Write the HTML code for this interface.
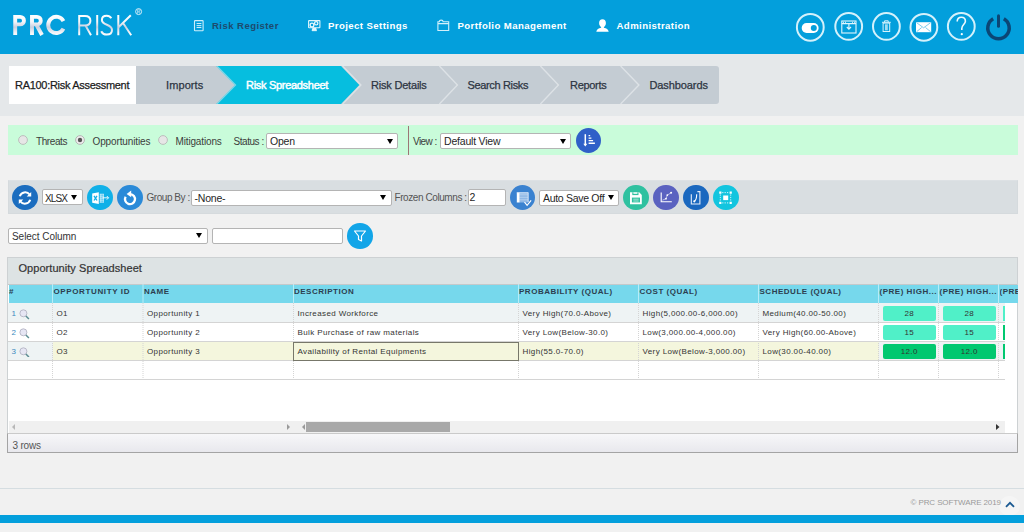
<!DOCTYPE html>
<html><head><meta charset="utf-8">
<style>
*{box-sizing:border-box;margin:0;padding:0}
html,body{width:1024px;height:532px;overflow:hidden;background:#f1f1f1;font-family:"Liberation Sans",sans-serif;position:relative}
.a{position:absolute;white-space:nowrap}
#hdr{left:0;top:0;width:1024px;height:54px;background:#039fdc}
.nav{font-size:9.6px;font-weight:700;color:#fff;top:19.8px;line-height:12px;letter-spacing:0.42px}
.circ{width:29px;height:29px;border:2px solid #d6f3fc;border-radius:50%;top:12.5px}
#band{left:0;top:54px;width:1024px;height:62px;background:#e5e8ea}
.tab{font-size:11px;color:#2d3542;top:78.5px;line-height:12px;-webkit-text-stroke:0.25px currentColor}
.lbl{font-size:10px;color:#3c3c3c;line-height:12px}
.sel{background:#fff;border:1px solid #b4b4b4;border-radius:2px;font-size:10.5px;color:#262626;line-height:15px;padding-left:3px;letter-spacing:-0.2px}
.sel .ar{position:absolute;right:4.5px;top:4.8px;width:0;height:0;border-left:3px solid transparent;border-right:3px solid transparent;border-top:5.2px solid #000}
.btn{border-radius:50%;width:25.5px;height:25.5px}
.btn svg{position:absolute;left:0;top:0}
.g{font-size:8px;color:#333;line-height:10px;letter-spacing:0.38px}
.gh{font-size:8px;font-weight:700;color:#2c3e50;line-height:10px;letter-spacing:0.5px}
</style></head><body>
<!-- HEADER -->
<div id="hdr" class="a"></div>
<svg class="a" style="left:0;top:0" width="160" height="54">
<defs><linearGradient id="lg" gradientUnits="userSpaceOnUse" x1="0" y1="14" x2="0" y2="36"><stop offset="0" stop-color="#ffffff"/><stop offset="0.35" stop-color="#f4f6fa"/><stop offset="0.6" stop-color="#c9d0e0"/><stop offset="0.85" stop-color="#f2f4f8"/><stop offset="1" stop-color="#ffffff"/></linearGradient></defs>
<g fill="none" stroke="url(#lg)" stroke-width="3.9">
<path d="M15.2 35V16.9H20.2A3.75 3.75 0 0 1 20.2 24.4H15.2"/>
<path d="M32 35V16.9H37A3.75 3.75 0 0 1 37 24.4H32M36.2 24.4L42 35"/>
<path d="M63.45 21.1A8.1 8.1 0 1 0 63.45 28.7"/>
</g>
<g fill="none" stroke="url(#lg)" stroke-width="2">
<path d="M79.2 35.2V15.9H85C88.5 15.9 90.4 18 90.4 20.7C90.4 23.5 88.5 25.5 85 25.5H79.2M85.5 25.5L91 35.2"/>
<path d="M97.2 15V35.2"/>
<path d="M111.3 18.3C110.3 16.6 108.7 15.8 106.7 15.8C103.9 15.8 101.9 17.5 101.9 20C101.9 25.8 112 23.8 112 30C112 33 109.6 34.6 106.7 34.6C104.3 34.6 102.3 33.4 101.2 31.2"/>
<path d="M118.3 15V35.2M130.8 15.2L118.8 27M123.2 23.2L131.2 35.2"/>
</g>
<circle cx="138.6" cy="11.6" r="3" fill="none" stroke="#e8f4fa" stroke-width="0.9"/>
<path d="M137.6 13.6V9.8H139A1 1 0 0 1 139 11.8H137.6M138.8 11.8L139.8 13.6" fill="none" stroke="#e8f4fa" stroke-width="0.6"/>
</svg>
<!-- nav icons -->
<svg class="a" style="left:192px;top:19px" width="13" height="13"><rect x="2.5" y="1.6" width="8.6" height="10.2" rx="0.6" fill="none" stroke="#cdeefa" stroke-width="1.1"/><path d="M4.6 4.5h4.8M4.6 6.6h4.8M4.6 8.5h4.8" stroke="#cdeefa" stroke-width="1"/></svg>
<div class="a nav" style="left:212px;color:#1d4b6e;">Risk Register</div>
<svg class="a" style="left:307px;top:19px" width="15" height="13"><g fill="none" stroke="#e0f5fc" stroke-width="1.1"><rect x="1.6" y="1.6" width="11.3" height="7.2" rx="0.5"/><path d="M4.8 11.6h5"/></g><path d="M5.5 8.8l-0.8 2.5h5.2l-0.8-2.5z" fill="#e0f5fc"/><circle cx="5" cy="6" r="1.9" fill="none" stroke="#e8f8fe" stroke-width="1.3"/><circle cx="9.2" cy="4.3" r="1.7" fill="none" stroke="#e8f8fe" stroke-width="1.2"/></svg>
<div class="a nav" style="left:328px;">Project Settings</div>
<svg class="a" style="left:436px;top:18px" width="15" height="14"><path d="M1.9 3.7h1.4a1.9 1.6 0 0 1 3.8 0h5.6V12.5H1.9Z M1.9 5.6h10.8" fill="none" stroke="#d2f0fb" stroke-width="1.1"/></svg>
<div class="a nav" style="left:457.5px;">Portfolio Management</div>
<svg class="a" style="left:595px;top:18px" width="15" height="14"><path d="M7.5 1.2c2.2 0 3.4 1.6 3.4 3.8 0 2-1.1 3.6-2 4.1v.7c2.5.6 4.5 1.6 4.8 3.9H1.3c.3-2.3 2.3-3.3 4.8-3.9v-.7c-.9-.5-2-2.1-2-4.1 0-2.2 1.2-3.8 3.4-3.8z" fill="#fff"/></svg>
<div class="a nav" style="left:616.5px;">Administration</div>
<!-- right icons -->
<svg class="a" style="left:780px;top:0" width="244" height="54">
<g fill="none" stroke="#d4f1fb" stroke-width="2"><circle cx="30.3" cy="27.3" r="13.4"/><circle cx="68.7" cy="26.4" r="13.4"/><circle cx="106.4" cy="26.4" r="13.4"/><circle cx="143.9" cy="27.3" r="13.4"/><circle cx="181.3" cy="26.4" r="13.4"/></g>
<rect x="21.7" y="23.1" width="16.9" height="9.8" rx="4.9" fill="#fff"/><circle cx="33.8" cy="28" r="3" fill="#039fdc"/>
<g fill="none" stroke="#e2f6fd" stroke-width="1.1"><rect x="61.8" y="21" width="14.2" height="12"/><path d="M61.8 23.6h14.2M68.9 23.6v5.5M66.8 27l2.1 2.2 2.1-2.2"/></g><path d="M63 22.3h1M65 22.3h1M72 22.3h1M74 22.3h1" stroke="#e2f6fd" stroke-width="1"/>
<g fill="none" stroke="#d8f3fc" stroke-width="1"><path d="M102 22.3h8.8M104.6 22.3V20.8h3.6v1.5"/><rect x="103.1" y="23.1" width="6.6" height="8.4"/></g><rect x="105" y="24.3" width="2.8" height="6" fill="#9fdcf3"/>
<path d="M916 22.2h15.2v10H916z" transform="translate(-780 0)" fill="#fff"/><path d="M136.5 22.6l7.1 5.2 7.1-5.2M136.5 31.8l5.2-4.3M150.7 31.8l-5.2-4.3" fill="none" stroke="#6cc6ea" stroke-width="0.9"/>
<path d="M177.2 21.6c0-2.6 1.8-4.4 4.2-4.4s4 1.7 4 4c0 3-3.6 3.8-3.6 7.2v1.6" fill="none" stroke="#f0fafe" stroke-width="1.6"/><circle cx="181.8" cy="34.2" r="1.1" fill="#fff"/>
<path d="M213.15 18.73A10.7 10.7 0 1 0 223.85 18.73" fill="none" stroke="#0b4675" stroke-width="3.5"/><path d="M218.5 15.7v10.5" stroke="#0b4675" stroke-width="3" stroke-linecap="round"/>
</svg>

<!-- TAB BAND -->
<div id="band" class="a"></div>
<svg class="a" style="left:9px;top:66px" width="712" height="38">
<path d="M127 0H707a3 3 0 0 1 3 3V35a3 3 0 0 1-3 3H127Z" fill="#c4ccd3"/>
<rect x="0" y="0" width="127" height="38" fill="#fff"/>
<path d="M207.3 0H332L350.3 19L332 38H207.3L226 19Z" fill="#06bedf"/>
<path d="M207.8 0L226.5 19L207.8 38" fill="none" stroke="#80d6e6" stroke-width="1.3"/>
<path d="M333.6 0L351.9 19L333.6 38M430.4 0l18 19-18 19M531.4 0l18 19-18 19M611.6 0l18.3 19-18.3 19" fill="none" stroke="#dde2e6" stroke-width="1.4"/>
</svg>
<div class="a tab" style="left:15px;color:#1c1c1c;letter-spacing:-0.3px">RA100:Risk Assessment</div>
<div class="a tab" style="left:166px;letter-spacing:0.1px">Imports</div>
<div class="a tab" style="left:246px;color:#fff;letter-spacing:-0.3px;-webkit-text-stroke:0.45px #fff">Risk Spreadsheet</div>
<div class="a tab" style="left:371px;letter-spacing:-0.2px">Risk Details</div>
<div class="a tab" style="left:467.5px;letter-spacing:-0.35px">Search Risks</div>
<div class="a tab" style="left:570px;letter-spacing:-0.3px">Reports</div>
<div class="a tab" style="left:649.5px;letter-spacing:-0.1px">Dashboards</div>

<!-- GREEN BAR -->
<div class="a" style="left:8px;top:125px;width:1010px;height:30px;background:#c9fcda"></div>
<svg class="a" style="left:17px;top:134px" width="12" height="12"><circle cx="6" cy="6" r="4.4" fill="#e6e6e6" stroke="#b8b8b8" stroke-width="0.9"/></svg>
<div class="a lbl" style="left:36px;top:135.8px;letter-spacing:-0.4px">Threats</div>
<svg class="a" style="left:73.5px;top:134px" width="12" height="12"><circle cx="6" cy="6" r="4.4" fill="#ececec" stroke="#b0b0b0" stroke-width="0.9"/><circle cx="6" cy="6" r="2.2" fill="#555"/></svg>
<div class="a lbl" style="left:92.5px;top:135.8px;letter-spacing:-0.12px">Opportunities</div>
<svg class="a" style="left:157px;top:134px" width="12" height="12"><circle cx="6" cy="6" r="4.4" fill="#e6e6e6" stroke="#b8b8b8" stroke-width="0.9"/></svg>
<div class="a lbl" style="left:175.5px;top:135.8px;letter-spacing:-0.15px">Mitigations</div>
<div class="a lbl" style="left:233.5px;top:135.8px;letter-spacing:-0.45px">Status :</div>
<div class="a sel" style="left:266px;top:133px;width:132px;height:16px">Open<span class="ar"></span></div>
<div class="a" style="left:408px;top:125.5px;width:1.3px;height:29.5px;background:#9c7676"></div>
<div class="a lbl" style="left:413px;top:135.8px;letter-spacing:-0.55px">View :</div>
<div class="a sel" style="left:440px;top:133px;width:131px;height:16px">Default View<span class="ar"></span></div>
<div class="a btn" style="left:576px;top:128px;width:25px;height:25px;background:#3060c8"><svg width="25" height="25"><path d="M9.3 6.2v11" stroke="#fff" stroke-width="1.5"/><path d="M7.3 15.8l2 2.8 2-2.8z" fill="#fff"/><path d="M12.6 7h1.6v1.3h-1.6zM12.6 9.5h2.8v1.3h-2.8zM12.6 12h4.5v1.3h-4.5zM12.6 14.5h6.3v1.6h-6.3z" fill="#fff"/></svg></div>

<!-- TOOLBAR -->
<div class="a" style="left:8px;top:180px;width:1010px;height:34px;background:#d9dee1;border:1px solid #d5dadd;border-top-color:#dde1e4"></div>
<div class="a btn" style="left:12px;top:184.5px;background:#1b6dbf"><svg width="26" height="26"><path d="M7.8 11.3a5.6 5.6 0 0 1 9.8-1.8M18.2 14.7a5.6 5.6 0 0 1-9.8 1.8" fill="none" stroke="#fff" stroke-width="2"/><path d="M19.2 7v4.5h-4.5zM6.8 19v-4.5h4.5z" fill="#fff"/></svg></div>
<div class="a sel" style="left:41.5px;top:189px;width:41px;height:16px;padding-left:2.5px;font-size:10px;letter-spacing:-0.85px;line-height:17.5px">XLSX<span class="ar"></span></div>
<div class="a btn" style="left:87px;top:184.5px;background:#10b0e8"><svg width="26" height="26"><path d="M5.2 8.4L11.8 7.2V19L5.2 17.8Z" fill="#fff"/><path d="M7 10.9l3 4.6M10 10.9l-3 4.6" stroke="#10b0e8" stroke-width="1.3"/><path d="M12.6 9.2h4.3M12.6 11.2h4.3M12.6 13.2h4.3M12.6 15.2h4.3M12.6 17.2h4.3M13.4 9v8.5M14.9 9v8.5M16.4 9v8.5" stroke="#dff4fc" stroke-width="0.7"/><path d="M15.5 12.8h5.8M19.8 11l1.8 1.8-1.8 1.8" fill="none" stroke="#fff" stroke-width="0.9"/></svg></div>
<div class="a btn" style="left:117px;top:184.5px;background:#2a8ad8"><svg width="26" height="26"><path d="M13.2 9.1A5 5 0 1 1 8.6 11.7" fill="none" stroke="#fff" stroke-width="2.3"/><path d="M14.2 5.6V12.2L9.6 8.9Z" fill="#fff"/></svg></div>
<div class="a lbl" style="left:146.5px;top:191.8px;color:#555;letter-spacing:-0.45px">Group By :</div>
<div class="a sel" style="left:190.5px;top:189.5px;width:201px;height:16px">-None-<span class="ar"></span></div>
<div class="a lbl" style="left:394.5px;top:191.8px;color:#555;letter-spacing:-0.42px">Frozen Columns :</div>
<div class="a sel" style="left:467.5px;top:188.5px;width:38px;height:17.5px;padding-left:1px">2</div>
<div class="a btn" style="left:509.5px;top:184.5px;background:#3a82d0"><svg width="26" height="26"><path d="M9.5 7.5h8.5v10H9.5z" fill="#8fb8e6"/><path d="M9.5 9.8h8.5M9.5 12.3h8.5M9.5 14.8h8.5" stroke="#b8d3f1" stroke-width="0.9"/><path d="M6.8 7.5h2.8v10H6.8z" fill="#fff"/><path d="M6.8 7.8h11.4M18.2 7.5v9.5" stroke="#e4eefa" stroke-width="0.9"/><path d="M14.5 17.2l2.6 3.2 4-5" fill="none" stroke="#fff" stroke-width="1.2"/></svg></div>
<div class="a sel" style="left:539px;top:189.5px;width:80px;height:16px;padding-left:3px;letter-spacing:-0.3px">Auto Save Off<span class="ar" style="right:4.5px"></span></div>
<div class="a btn" style="left:623px;top:184.5px;background:#2fc1a0"><svg width="26" height="26"><path d="M7 7.3h9.2l2.6 2.6v9.4H7z" fill="#fff"/><path d="M9.3 7.3h6.2v2.8H9.3z" fill="#2fc1a0"/><path d="M10.4 7.3h4v1.5h-4z" fill="#fff"/><path d="M8.9 12.6h8.1v4.8H8.9z" fill="#2fc1a0"/><path d="M10.3 14.2h5.3M10.3 16h5.3" stroke="#c8efe5" stroke-width="0.8"/></svg></div>
<div class="a btn" style="left:653px;top:184.5px;background:#5a62c0"><svg width="26" height="26"><path d="M8.2 7.4V16.8H18.8" fill="none" stroke="#fff" stroke-width="1.1"/><path d="M9.4 15.2L13 13.7L14.3 10.1L18.1 7.8" fill="none" stroke="#dfe2f6" stroke-width="0.7"/><circle cx="13" cy="13.7" r="0.9" fill="#fff"/><circle cx="14.3" cy="10.1" r="0.9" fill="#fff"/><circle cx="18.1" cy="7.8" r="1" fill="#fff"/></svg></div>
<div class="a btn" style="left:683px;top:184.5px;background:#1a68bf"><svg width="26" height="26"><path d="M8.3 9.2V19H16.9V6.6H14.4" fill="none" stroke="#e6eef9" stroke-width="1.1"/><path d="M11.3 16.2C12.7 15.5 13.6 13.8 13.7 9.2" fill="none" stroke="#fff" stroke-width="1.1"/><circle cx="11.3" cy="16.3" r="1.1" fill="#fff"/></svg></div>
<div class="a btn" style="left:713px;top:184.5px;background:#12c5df"><svg width="26" height="26"><path d="M10.2 10.5h5v4.6h-5z" fill="#fff"/><path d="M6.2 6.5h2.2v2.2H6.2zM16.6 6.5h2.2v2.2h-2.2zM6.2 16.8h2.2v2.2H6.2zM16.6 16.8h2.2v2.2h-2.2z" fill="#fff"/><path d="M9.2 7.6h7M9.2 17.9h7M7.3 9.5v6.8M17.7 9.5v6.8" stroke="#e8fafd" stroke-width="0.9" stroke-dasharray="1.2 1.2"/></svg></div>

<!-- FILTER ROW -->
<div class="a sel" style="left:7.5px;top:227.5px;width:200px;height:16.5px;font-size:10px;padding-left:3.5px;color:#333;letter-spacing:-0.05px;line-height:16px">Select Column<span class="ar" style="right:5px"></span></div>
<div class="a sel" style="left:211.5px;top:227.5px;width:131px;height:16.5px"></div>
<div class="a btn" style="left:347px;top:223px;background:#12a5e8"><svg width="26" height="26"><path d="M7.5 8h11l-4 5v5l-3-1.5v-3.5z" fill="none" stroke="#fff" stroke-width="1.2" stroke-linejoin="round"/></svg></div>

<!-- GRID PANEL -->
<div class="a" style="left:7px;top:257px;width:1011px;height:196px;border:1px solid #cdd1d3;background:#fff"></div>
<div class="a" style="left:8px;top:258px;width:1009px;height:26.5px;background:#dde3e4;border-bottom:1px solid #c4c9cb"></div>
<div class="a" style="left:18.5px;top:262px;font-size:11px;color:#333;line-height:13px;letter-spacing:0.05px;-webkit-text-stroke:0.2px #333">Opportunity Spreadsheet</div>
<!-- header -->
<div class="a" style="left:8.5px;top:284.5px;width:1009px;height:18.5px;background:#76d8ec"></div>
<svg class="a" style="left:8px;top:284px" width="1010" height="20"><path d="M44.5 0v19M135 0v19M285.5 0v19M510.5 0v19M630.5 0v19M750.5 0v19M870.5 0v19M930.5 0v19M990.5 0v19" stroke="#b7ecf7" stroke-width="1"/></svg>
<div class="a gh" style="left:9px;top:287px">#</div>
<div class="a gh" style="left:53.5px;top:287px;letter-spacing:0.62px">OPPORTUNITY ID</div>
<div class="a gh" style="left:144px;top:287px">NAME</div>
<div class="a gh" style="left:294px;top:287px;letter-spacing:0.5px">DESCRIPTION</div>
<div class="a gh" style="left:519px;top:287px;letter-spacing:0.52px">PROBABILITY (QUAL)</div>
<div class="a gh" style="left:639.5px;top:287px;letter-spacing:0.52px">COST (QUAL)</div>
<div class="a gh" style="left:759.5px;top:287px;letter-spacing:0.52px">SCHEDULE (QUAL)</div>
<div class="a gh" style="left:879.5px;top:287px;letter-spacing:0.52px">(PRE) HIGH...</div>
<div class="a gh" style="left:939.5px;top:287px;letter-spacing:0.52px">(PRE) HIGH...</div>
<div class="a" style="left:999.5px;top:284.5px;width:18px;height:18.5px;overflow:hidden"><div class="a gh" style="left:0;top:2.5px;letter-spacing:0.52px">(PRE) HIGH...</div></div>
<!-- rows -->
<div class="a" style="left:8px;top:303px;width:996.5px;height:20px;background:#eef3f4;border-bottom:1px solid #d4d4d4"></div>
<div class="a" style="left:8px;top:323px;width:996.5px;height:19px;background:#fff;border-bottom:1px solid #d4d4d4"></div>
<div class="a" style="left:8px;top:342px;width:996.5px;height:19px;background:#f4f6dd;border-bottom:1px solid #d4d4d4"></div>
<div class="a" style="left:8px;top:342px;width:44.5px;height:18px;background:#eef3f4"></div>
<div class="a" style="left:878.5px;top:342px;width:126px;height:18px;background:#eef3f4"></div>
<div class="a" style="left:8px;top:361px;width:996.5px;height:19px;background:#fff;border-bottom:1px solid #d4d4d4"></div>
<svg class="a" style="left:8px;top:303px" width="1000" height="77"><path d="M44.5 0v76M135 0v76M285.5 0v76M510.5 0v76M630.5 0v76M750.5 0v76M870.5 0v76M930.5 0v76M990.5 0v76" stroke="#d4d4d4" stroke-width="1" stroke-dasharray="1 1"/></svg>
<!-- selected cell -->
<div class="a" style="left:293px;top:342px;width:226px;height:19px;border:1px solid #77776a"></div>
<!-- row number + magnifier -->
<div class="a g" style="left:11.5px;top:309px;color:#3b8ac0">1</div>
<div class="a g" style="left:11.5px;top:328px;color:#3b8ac0">2</div>
<div class="a g" style="left:11.5px;top:347px;color:#3b8ac0">3</div>
<svg class="a" style="left:19px;top:307px" width="12" height="50"><circle cx="4.4" cy="6.3" r="3.5" fill="#e6e6f4" stroke="#b4b4c4" stroke-width="0.9"/><path d="M6.9 8.9l3 3.2" stroke="#5d8d94" stroke-width="1.5"/><circle cx="4.4" cy="25.3" r="3.5" fill="#e6e6f4" stroke="#b4b4c4" stroke-width="0.9"/><path d="M6.9 27.900000000000002l3 3.2" stroke="#5d8d94" stroke-width="1.5"/><circle cx="4.4" cy="44.3" r="3.5" fill="#e6e6f4" stroke="#b4b4c4" stroke-width="0.9"/><path d="M6.9 46.9l3 3.2" stroke="#5d8d94" stroke-width="1.5"/></svg>
<!-- cells row1 -->
<div class="a g" style="left:56.5px;top:309px">O1</div>
<div class="a g" style="left:147px;top:309px">Opportunity 1</div>
<div class="a g" style="left:297.5px;top:309px">Increased Workforce</div>
<div class="a g" style="left:522.5px;top:309px">Very High(70.0-Above)</div>
<div class="a g" style="left:642.5px;top:309px">High(5,000.00-6,000.00)</div>
<div class="a g" style="left:762.5px;top:309px">Medium(40.00-50.00)</div>
<div class="a g" style="left:56.5px;top:328px">O2</div>
<div class="a g" style="left:147px;top:328px">Opportunity 2</div>
<div class="a g" style="left:297.5px;top:328px">Bulk Purchase of raw materials</div>
<div class="a g" style="left:522.5px;top:328px">Very Low(Below-30.0)</div>
<div class="a g" style="left:642.5px;top:328px">Low(3,000.00-4,000.00)</div>
<div class="a g" style="left:762.5px;top:328px">Very High(60.00-Above)</div>
<div class="a g" style="left:56.5px;top:347px">O3</div>
<div class="a g" style="left:147px;top:347px">Opportunity 3</div>
<div class="a g" style="left:297.5px;top:347px">Availability of Rental Equipments</div>
<div class="a g" style="left:522.5px;top:347px">High(55.0-70.0)</div>
<div class="a g" style="left:642.5px;top:347px">Very Low(Below-3,000.00)</div>
<div class="a g" style="left:762.5px;top:347px">Low(30.00-40.00)</div>
<!-- colored score boxes -->
<div class="a g" style="left:883px;top:306px;width:52.5px;height:15px;background:#50f0c8;border-radius:2px;text-align:center;line-height:15px;letter-spacing:0.3px">28</div>
<div class="a g" style="left:943px;top:306px;width:52.5px;height:15px;background:#50f0c8;border-radius:2px;text-align:center;line-height:15px;letter-spacing:0.3px">28</div>
<div class="a" style="left:1003px;top:306px;width:1.5px;height:15px;background:#50f0c8"></div>
<div class="a g" style="left:883px;top:325px;width:52.5px;height:15px;background:#50f0c8;border-radius:2px;text-align:center;line-height:15px;letter-spacing:0.3px">15</div>
<div class="a g" style="left:943px;top:325px;width:52.5px;height:15px;background:#50f0c8;border-radius:2px;text-align:center;line-height:15px;letter-spacing:0.3px">15</div>
<div class="a" style="left:1003px;top:325px;width:1.5px;height:15px;background:#00c870"></div>
<div class="a g" style="left:883px;top:344px;width:52.5px;height:15px;background:#00c870;border-radius:2px;text-align:center;line-height:15px;letter-spacing:0.3px">12.0</div>
<div class="a g" style="left:943px;top:344px;width:52.5px;height:15px;background:#00c870;border-radius:2px;text-align:center;line-height:15px;letter-spacing:0.3px">12.0</div>
<div class="a" style="left:1003px;top:344px;width:1.5px;height:15px;background:#00c870"></div>
<!-- h scrollbar -->
<div class="a" style="left:8.5px;top:421px;width:996px;height:12px;background:#f0f0f0"></div>
<svg class="a" style="left:8px;top:421px" width="1000" height="12"><path d="M4 6l3-3v6z" fill="#b8b8b8"/><path d="M279 3v6l3-3z" fill="#9a9a9a"/><path d="M294 6l3-3v6z" fill="#9a9a9a"/><path d="M988 3v6l3.5-3z" fill="#333"/></svg>
<div class="a" style="left:306px;top:422px;width:144px;height:9.5px;background:#a9a9a9"></div>
<!-- footer -->
<div class="a" style="left:7px;top:433px;width:1011px;height:20px;background:linear-gradient(#f7f7f9,#e8e8ed);border:1px solid #a4a4a4;border-top:1px solid #cacaca"></div>
<div class="a" style="left:12.5px;top:439.5px;font-size:10px;color:#555;line-height:12px;letter-spacing:-0.2px">3 rows</div>

<!-- PAGE FOOTER -->
<div class="a" style="left:0;top:488px;width:1024px;height:1px;background:#d5dde1"></div>
<div class="a" style="left:999px;top:496px;width:21px;height:20px;border-radius:50%;background:#f5f5f5"></div>
<div class="a" style="left:910.5px;top:498px;font-size:8px;color:#9a9a9a;line-height:10px;letter-spacing:-0.1px">© PRC SOFTWARE 2019</div>
<svg class="a" style="left:1004px;top:500px" width="12" height="9"><path d="M2 6.8L6 2.8 10 6.8" fill="none" stroke="#1b5a92" stroke-width="1.8"/></svg>
<div class="a" style="left:0;top:515px;width:1024px;height:8px;background:#039fdc"></div>
</body></html>
